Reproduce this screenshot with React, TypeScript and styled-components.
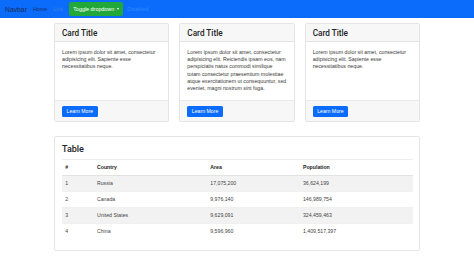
import { createGlobalStyle, styled } from 'styled-components';

const GlobalStyle = createGlobalStyle`
  * {
    box-sizing: border-box;
  }

  body {
    margin: 0;
    font-family: 'Liberation Sans', Arial, sans-serif;
    color: #212529;
    background: #fff;
  }
`;

const SNavbar = styled.nav`
  display: flex;
  align-items: center;
  height: 18px;
  padding: 0 5px;
  background-color: #0b6cfb;
  font-size: 5.4px;
`;

const SBrand = styled.span`
  margin-right: 6px;
  font-size: 6.8px;
  color: #1b2a55;
`;

const SNavLink = styled.span<{ $tone: 'active' | 'muted' | 'disabled' }>`
  margin-right: ${({ $tone }) => ($tone === 'disabled' ? '0' : '6px')};
  color: ${({ $tone }) =>
    $tone === 'active' ? '#16306a' : $tone === 'muted' ? '#3f7fe0' : '#2f86ff'};
`;

const SDropdown = styled.span`
  display: flex;
  align-items: center;
  gap: 2px;
  height: 13.5px;
  margin-right: 4px;
  padding: 0 4px;
  color: #fff;
  background-color: #22a83a;
  border-radius: 2px;

  &::after {
    content: '';
    border-top: 2px solid #fff;
    border-left: 1.6px solid transparent;
    border-right: 1.6px solid transparent;
    margin-left: 1px;
  }
`;

const SContainer = styled.main`
  width: 366px;
  margin: 0 auto;
  padding-top: 5px;
`;

const SCardDeck = styled.div`
  display: grid;
  grid-template-columns: repeat(3, 1fr);
  gap: 10px;
`;

const SCard = styled.div`
  display: flex;
  flex-direction: column;
  background: #fff;
  border: 1px solid rgba(0, 0, 0, 0.1);
  border-radius: 2px;
  overflow: hidden;
`;

const SCardHeader = styled.div`
  display: flex;
  align-items: center;
  height: 18px;
  padding: 0 7px;
  font-family: Roboto, 'Liberation Sans', sans-serif;
  font-size: 8.2px;
  font-weight: 500;
  color: #222;
  background: #f7f7f7;
  border-bottom: 1px solid rgba(0, 0, 0, 0.08);
`;

const SCardBody = styled.div`
  flex: 1;
  padding: 7px 7px 8px;
  font-size: 5.25px;
  line-height: 7.2px;
  color: #3a3a3a;
`;

const SCardFooter = styled.div`
  display: flex;
  padding: 4.5px 7px 4px;
  background: #f7f7f7;
  border-top: 1px solid rgba(0, 0, 0, 0.05);
`;

const SButton = styled.button`
  height: 11.5px;
  padding: 0 4.5px;
  font-family: inherit;
  font-size: 5.2px;
  color: #fff;
  background: #0b6cfb;
  border: none;
  border-radius: 1.5px;
`;

const STableCard = styled.section`
  margin-top: 14px;
  padding: 7px 7px 11px;
  border: 1px solid rgba(0, 0, 0, 0.1);
  border-radius: 2px;
`;

const STableTitle = styled.h3`
  margin: 0 0 4px;
  font-family: Roboto, 'Liberation Sans', sans-serif;
  font-size: 9px;
  font-weight: 500;
  line-height: 11px;
  color: #222;
`;

const STable = styled.table`
  width: 100%;
  border-collapse: collapse;
  table-layout: fixed;
  font-size: 5.2px;
  color: #444;
`;

const SHeadCell = styled.th<{ $width: number }>`
  width: ${({ $width }) => $width}px;
  height: 15.5px;
  padding: 0 3.3px;
  text-align: left;
  font-weight: 700;
  color: #222;
  border-top: 1px solid #eee;
  border-bottom: 1px solid #e2e2e2;
`;

const SRow = styled.tr<{ $striped: boolean }>`
  background: ${({ $striped }) => ($striped ? '#f2f2f2' : 'transparent')};
`;

const SCell = styled.td`
  height: 16px;
  padding: 0 3.3px;
  border-top: 1px solid #f0f0f0;
`;

const shortText = 'Lorem ipsum dolor sit amet, consectetur adipisicing elit. Sapiente esse necessitatibus neque.';
const longText =
  'Lorem ipsum dolor sit amet, consectetur adipisicing elit. Reiciendis ipsam eos, nam perspiciatis natus commodi similique totam consectetur praesentium molestiae atque exercitationem ut consequuntur, sed eveniet, magni nostrum sint fuga.';

const cards = [shortText, longText, shortText];

const columns = [
  { label: '#', width: 31.7 },
  { label: 'Country', width: 113.3 },
  { label: 'Area', width: 92.7 },
  { label: 'Population', width: 113.3 },
];

const rows = [
  ['1', 'Russia', '17,075,200', '36,624,199'],
  ['2', 'Canada', '9,976,140', '146,989,754'],
  ['3', 'United States', '9,629,091', '324,459,463'],
  ['4', 'China', '9,596,960', '1,409,517,397'],
];

const App = () => (
  <>
    <GlobalStyle />
    <SNavbar>
      <SBrand>Navbar</SBrand>
      <SNavLink $tone='active'>Home</SNavLink>
      <SNavLink $tone='muted'>Link</SNavLink>
      <SDropdown>Toggle dropdown</SDropdown>
      <SNavLink $tone='disabled'>Disabled</SNavLink>
    </SNavbar>
    <SContainer>
      <SCardDeck>
        {cards.map((text, i) => (
          <SCard key={i}>
            <SCardHeader>Card Title</SCardHeader>
            <SCardBody>{text}</SCardBody>
            <SCardFooter>
              <SButton>Learn More</SButton>
            </SCardFooter>
          </SCard>
        ))}
      </SCardDeck>
      <STableCard>
        <STableTitle>Table</STableTitle>
        <STable>
          <thead>
            <tr>
              {columns.map((col) => (
                <SHeadCell key={col.label} $width={col.width}>
                  {col.label}
                </SHeadCell>
              ))}
            </tr>
          </thead>
          <tbody>
            {rows.map((row, i) => (
              <SRow key={row[0]} $striped={i % 2 === 0}>
                {row.map((cell, j) => (
                  <SCell key={j}>{cell}</SCell>
                ))}
              </SRow>
            ))}
          </tbody>
        </STable>
      </STableCard>
    </SContainer>
  </>
);

export default App;
